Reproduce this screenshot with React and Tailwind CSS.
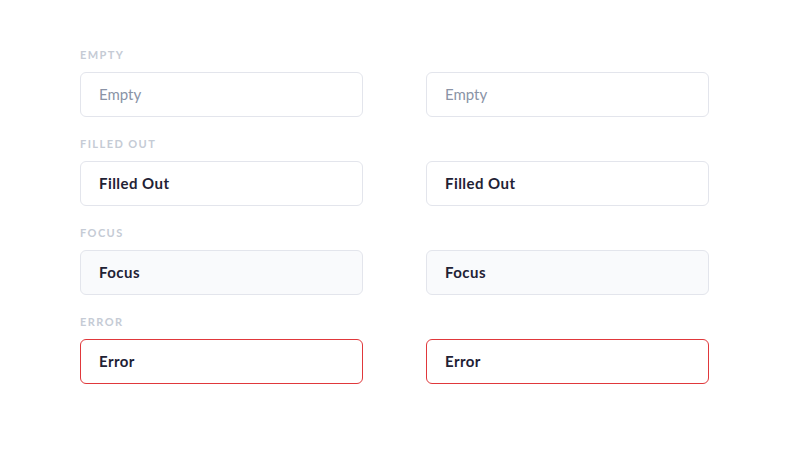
const rows = [
  { label: "Empty", value: "Empty", kind: "empty" },
  { label: "Filled Out", value: "Filled Out", kind: "filled" },
  { label: "Focus", value: "Focus", kind: "focus" },
  { label: "Error", value: "Error", kind: "error" },
];

const Field = ({ value, kind }) => {
  const box =
    kind === "error"
      ? "border-[#e0383b] bg-white"
      : kind === "focus"
      ? "border-[#e3e5ec] bg-[#f9fafc]"
      : "border-[#e3e5ec] bg-white";
  const text =
    kind === "empty"
      ? "text-[#8a93a6] font-normal"
      : "text-[#1f2235] font-bold tracking-[0.03em]";
  return (
    <div
      className={`h-[45px] w-[283px] rounded-[6px] border flex items-center pl-[18px] text-[15px] ${box} ${text}`}
    >
      {value}
    </div>
  );
};

const App = () => {
  return (
    <div
      className="w-[790px] h-[466px] bg-white pt-[47px] pl-[80px]"
      style={{ fontFamily: "Lato, 'Open Sans', sans-serif" }}
    >
      <div className="flex flex-col gap-[19px]">
        {rows.map((row) => (
          <div key={row.label}>
            <div className="h-[16px] leading-[16px] text-[11px] font-bold uppercase tracking-[0.13em] text-[#c5cbd5] mb-[9px]">
              {row.label}
            </div>
            <div className="flex gap-[63px]">
              <Field value={row.value} kind={row.kind} />
              <Field value={row.value} kind={row.kind} />
            </div>
          </div>
        ))}
      </div>
    </div>
  );
};

export default App;
